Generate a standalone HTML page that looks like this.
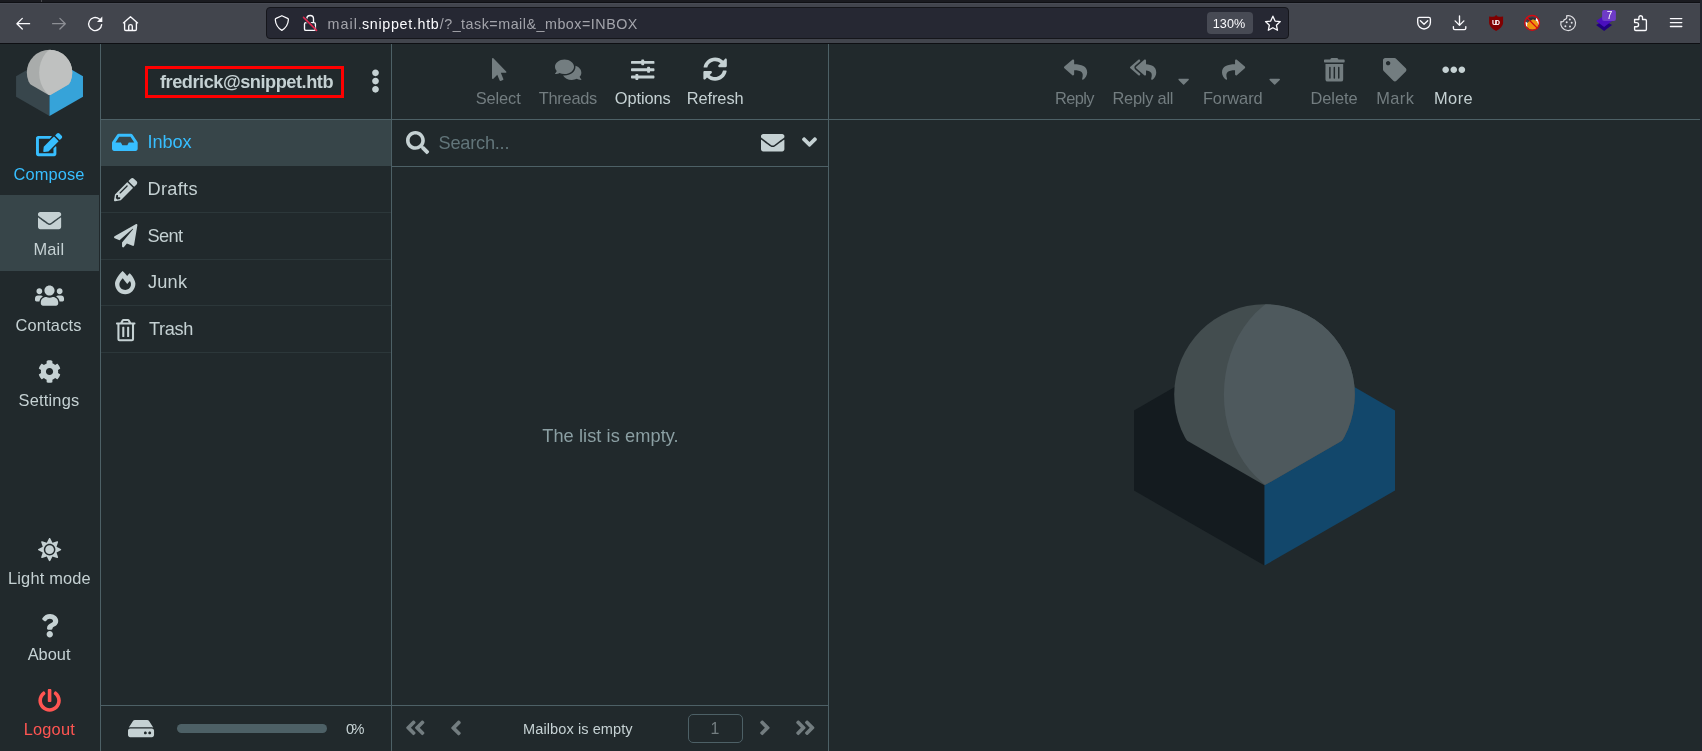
<!DOCTYPE html>
<html lang="en">
<head>
<meta charset="utf-8">
<title>Roundcube Webmail :: Inbox</title>
<style>
html,body{margin:0;padding:0;}
body{width:1702px;height:751px;overflow:hidden;background:#21292c;position:relative;
 font-family:"Liberation Sans",sans-serif;color:#c5d1d3;}
*{box-sizing:border-box;}
.abs{position:absolute;}
svg{position:absolute;display:block;overflow:visible;}
.t{position:absolute;white-space:nowrap;line-height:1;}
#tabstrip{left:0;top:0;width:1702px;height:3px;background:#1a1b20;border-bottom:1px solid #0f1014;}
#navbar{left:0;top:3px;width:1702px;height:40px;background:#42454d;border-top:1px solid #484b54;}
#navline{left:0;top:43px;width:1702px;height:1px;background:#0e0f13;}
#urlbar{left:266px;top:7px;width:1023px;height:32px;background:#262833;border:1px solid #15161b;border-radius:4px;}
#zoombadge{left:1207px;top:12px;width:46px;height:22px;background:#474a54;border-radius:4px;}
.vline{position:absolute;width:1px;background:#4d6066;}
.hline{position:absolute;height:1px;background:#4d6066;}
.rowline{position:absolute;height:1px;background:#2c373a;left:101px;width:290px;}
</style>
</head>
<body>
<!-- browser chrome -->
<div class="abs" id="tabstrip"></div>
<div class="abs" style="left:41px;top:0;width:1px;height:2px;background:#4a4b50"></div>
<div class="abs" id="navbar"></div>
<div class="abs" id="navline"></div>
<div class="abs" id="urlbar"></div>
<div class="abs" id="zoombadge"></div>
<!-- app structure -->
<div class="abs" style="left:0;top:195px;width:99px;height:76px;background:#374549"></div>
<div class="abs" style="left:101px;top:120px;width:290px;height:46px;background:#374549"></div>
<div class="vline" style="left:100px;top:44px;height:707px"></div>
<div class="vline" style="left:391px;top:44px;height:707px"></div>
<div class="vline" style="left:828px;top:44px;height:707px"></div>
<div class="hline" style="left:101px;top:119px;width:1601px"></div>
<div class="hline" style="left:392px;top:166px;width:436px"></div>
<div class="hline" style="left:101px;top:705px;width:727px"></div>
<div class="rowline" style="top:212px"></div>
<div class="rowline" style="top:259px"></div>
<div class="rowline" style="top:305px"></div>
<div class="rowline" style="top:352px"></div>
<!-- user box, quota bar, page input -->
<div class="abs" style="left:145.3px;top:66.3px;width:198.5px;height:32px;border:3.5px solid #ff0000"></div>
<div class="abs" style="left:176.6px;top:723.8px;width:150.5px;height:9.3px;border-radius:5px;background:#4d6066"></div>
<div class="abs" style="left:688px;top:714px;width:55px;height:29px;border:1px solid #4d6066;border-radius:5px"></div>
<!-- logos -->
<svg style="left:0;top:0" width="1702" height="751" viewBox="0 0 1702 751">
<g transform="">
<polygon fill="#141b1f" points="1134,410.4 1264.5,335.1 1264.5,565.5 1134,490.6"/>
<polygon fill="#12476b" points="1395,410.4 1264.5,335.1 1264.5,565.5 1395,490.6"/>
<clipPath id="lbv"><polygon points="1064.5,369.9 1064.5,200 1464.5,200 1464.5,369.9 1264.5,485.3"/></clipPath>
<clipPath id="lbc"><circle cx="1264.5" cy="394.6" r="90.3"/></clipPath>
<g clip-path="url(#lbv)">
<circle cx="1264.5" cy="394.6" r="90.3" fill="#434d4f"/>
<g clip-path="url(#lbc)"><ellipse cx="1311.00" cy="394.6" rx="87.1" ry="106" fill="#4e595d"/></g>
</g>
</g><g transform="translate(-274.69 -29.03) scale(0.2564)">
<polygon fill="#38464c" points="1134,410.4 1264.5,335.1 1264.5,565.5 1134,490.6"/>
<polygon fill="#36a3d9" points="1395,410.4 1264.5,335.1 1264.5,565.5 1395,490.6"/>
<clipPath id="lsv"><polygon points="1064.5,369.9 1064.5,200 1464.5,200 1464.5,369.9 1264.5,485.3"/></clipPath>
<clipPath id="lsc"><circle cx="1264.6" cy="396.2" r="88.7"/></clipPath>
<g clip-path="url(#lsv)">
<circle cx="1264.6" cy="396.2" r="88.7" fill="#a9acab"/>
<g clip-path="url(#lsc)"><ellipse cx="1311.10" cy="396.2" rx="87.1" ry="106" fill="#bfc1c0"/></g>
</g>
</g>
</svg>
<!-- browser chrome icons -->
<div class="abs" style="left:1700px;top:0;width:2px;height:751px;background:#23252e"></div>
<svg style="left:0;top:0" width="1702" height="44" viewBox="0 0 1702 44" fill="none" stroke="#fbfbfe" stroke-width="1.35" stroke-linecap="round" stroke-linejoin="round">
<!-- back -->
<path stroke-width="1.3" d="M29.6 23.7H17M22.3 18.4L16.9 23.7L22.3 29"/>
<!-- forward (disabled) -->
<path stroke="#8d8f95" stroke-width="1.3" d="M52.6 23.7H65.2M59.9 18.4L65.3 23.7L59.9 29"/>
<!-- reload -->
<path d="M101.63 24.62A6.5 6.5 0 1 1 99.33 19.07"/>
<path fill="#fbfbfe" stroke="none" d="M102.3 16.6V21.9H97z"/>
<!-- home -->
<path d="M123.4 22.9L130.5 16.7L137.6 22.9M124.6 22.2V29.2Q124.6 30.5 125.9 30.5H135.1Q136.4 30.5 136.4 29.2V22.2M128.7 30.3V26.2Q128.7 24.6 130.5 24.6Q132.3 24.6 132.3 26.2V30.3"/>
<!-- shield -->
<path stroke-width="1.25" d="M281.85 15.75L287.6 18.4Q288.5 18.8 288.4 19.8Q287.9 26.8 281.85 30.4Q275.8 26.8 275.3 19.8Q275.2 18.8 276.1 18.4Z"/>
<!-- lock -->
<path d="M306 22.6H313.9Q315.4 22.6 315.4 24.1V28.9Q315.4 30.4 313.9 30.4H306Q304.5 30.4 304.5 28.9V24.1Q304.5 22.6 306 22.6ZM306.8 22.4V18.85A3.35 3.35 0 0 1 313.5 18.85V22.4"/>
<path stroke="#262833" stroke-width="3.2" stroke-linecap="butt" d="M304.2 18.1L314.6 28.4"/>
<path stroke="#e22850" stroke-width="1.5" d="M303.5 17.4L316.6 30.4"/>
<!-- star -->
<path stroke-width="1.3" d="M1272.9 16.2L1275.1 21.1L1280.3 21.6L1276.4 25.2L1277.5 30.3L1272.9 27.7L1268.3 30.3L1269.4 25.2L1265.5 21.6L1270.7 21.1Z"/>
<!-- pocket -->
<path d="M1419.3 17.3H1428.8Q1430.4 17.3 1430.4 18.9V22.5A6.35 6.5 0 0 1 1417.7 22.5V18.9Q1417.7 17.3 1419.3 17.3ZM1420.4 20.8L1424.05 24.3L1427.7 20.8"/>
<!-- download -->
<path d="M1459.5 15.9V25.2M1455.1 20.9L1459.5 25.4L1463.9 20.9M1453.4 26.6V28.2Q1453.4 29.6 1454.8 29.6H1464.4Q1465.8 29.6 1465.8 28.2V26.6"/>
<!-- uBlock -->
<path fill="#800000" stroke="none" d="M1496.1 15L1497.6 16.5Q1500.5 16.9 1503.1 16.6V23.2Q1502.6 27.4 1496.1 30.9Q1489.6 27.4 1489.1 23.2V16.6Q1491.7 16.9 1494.6 16.5Z"/>
<!-- foxyproxy -->
<path fill="#2b3039" stroke="none" d="M1527 19.5Q1532 15.5 1537.5 19.5L1534 22H1529z"/>
<path fill="#ffffff" stroke="none" d="M1525.2 21.5L1528.6 23.4L1527.2 27.6Q1525 25 1525.2 21.5ZM1536.6 17.6L1539 21.5L1538.6 25.5L1535.4 20.6Z"/>
<ellipse cx="1532.6" cy="25" rx="5.6" ry="4.6" fill="#f0930f" stroke="none"/>
<path fill="#f0930f" stroke="none" d="M1528 22.5L1533 19.2L1537.6 21.8L1536 26H1529z"/>
<circle cx="1532.1" cy="22.9" r="7.4" stroke="#d80a10" stroke-width="1.3"/>
<path stroke="#d80a10" stroke-width="1.3" d="M1526.9 17.7L1537.3 28.1"/>
<!-- cookie -->
<path stroke="#e0e0e4" stroke-width="1.2" d="M1566.6 15.9A7.4 7.4 0 1 1 1560.9 21.6A2.4 2.4 0 0 0 1564.2 19.6A2.6 2.6 0 0 0 1566.6 15.9Z"/>
<g fill="#e0e0e4" stroke="none"><circle cx="1569.8" cy="19.4" r="1"/><circle cx="1566.7" cy="22.3" r="1"/><circle cx="1571.7" cy="22.7" r="1"/><circle cx="1565.4" cy="26.2" r="1"/><circle cx="1570" cy="26.4" r="1"/></g>
<!-- stack -->
<polygon fill="#21007f" stroke="none" points="1596.1,24.9 1604.1,20.5 1612.1,24.9 1604.1,31"/>
<polygon fill="#4a0fbe" stroke="none" points="1596.1,20.9 1604.1,15.5 1612.1,20.9 1604.1,27"/>
<rect x="1602.1" y="10" width="13.8" height="10.9" rx="2" fill="#6e3bc7" stroke="none"/>
<!-- extensions puzzle -->
<path d="M1634.6 19.5H1638.9V17.6A1.8 1.9 0 0 1 1642.5 17.6V19.5H1645.2Q1646.4 19.5 1646.4 20.7V29.3Q1646.4 30.5 1645.2 30.5H1635.8Q1634.6 30.5 1634.6 29.3V26.7H1636.6A2 2.05 0 0 0 1636.6 22.6H1634.6Z"/>
<!-- menu -->
<path stroke-width="1.3" d="M1670.4 18.6H1681.8M1670.4 22.6H1681.8M1670.4 26.5H1681.8"/>
</svg>

<!-- icons -->
<svg style="left:35.95px;top:132.66px" width="26.19" height="23.28" viewBox="0 0 576 512"><path fill="#37beff" d="M402.6 83.200l90.200 90.200c3.800 3.800 3.800 10 0 13.800L274.400 405.600l-92.800 10.300c-12.400 1.400-22.900-9.100-21.500-21.500l10.300-92.800L388.800 83.200c3.800-3.800 10-3.800 13.800 0zm162-22.900l-48.800-48.800c-15.200-15.200-39.900-15.200-55.200 0l-35.400 35.400c-3.800 3.800-3.800 10 0 13.800l90.200 90.200c3.800 3.800 10 3.800 13.800 0l35.400-35.400c15.200-15.300 15.200-40 0-55.200zM384 346.200V448H64V128h229.800c3.200 0 6.200-1.300 8.500-3.500l40-40c7.600-7.600 2.200-20.500-8.500-20.500H48C21.500 64 0 85.500 0 112v352c0 26.500 21.500 48 48 48h352c26.500 0 48-21.500 48-48V306.200c0-10.700-12.900-16-20.500-8.500l-40 40c-2.200 2.300-3.500 5.300-3.500 8.500z"/></svg>
<svg style="left:37.88px;top:209.07px" width="23.15" height="23.15" viewBox="0 0 512 512"><path fill="#c5d1d3" d="M502.3 190.800c3.900-3.100 9.700-.2 9.700 4.700V400c0 26.500-21.500 48-48 48H48c-26.500 0-48-21.500-48-48V195.600c0-5 5.700-7.800 9.700-4.700 22.400 17.400 52.100 39.500 154.100 113.600 21.100 15.400 56.700 47.800 92.200 47.600 35.700.3 72-32.800 92.300-47.600 102-74.100 131.600-96.300 154-113.700zM256 320c23.200.4 56.600-29.200 73.400-41.400 132.700-96.300 142.800-104.700 173.400-128.700 5.800-4.500 9.200-11.500 9.200-18.900v-19c0-26.500-21.500-48-48-48H48C21.500 64 0 85.500 0 112v19c0 7.400 3.400 14.300 9.200 18.900 30.600 23.900 40.700 32.400 173.400 128.700 16.800 12.200 50.200 41.800 73.400 41.400z"/></svg>
<svg style="left:34.89px;top:284.49px" width="29.03" height="23.22" viewBox="0 0 640 512"><path fill="#c5d1d3" d="M96 224c35.300 0 64-28.700 64-64s-28.700-64-64-64-64 28.700-64 64 28.700 64 64 64zm448 0c35.300 0 64-28.700 64-64s-28.700-64-64-64-64 28.700-64 64 28.700 64 64 64zm32 32h-64c-17.600 0-33.500 7.100-45.100 18.600 40.300 22.100 68.900 62 75.100 109.400h66c17.700 0 32-14.300 32-32v-32c0-35.300-28.700-64-64-64zm-256 0c61.900 0 112-50.100 112-112S381.900 32 320 32 208 82.100 208 144s50.100 112 112 112zm76.800 32h-8.300c-20.800 10-43.900 16-68.500 16s-47.600-6-68.500-16h-8.300C179.600 288 128 339.600 128 403.200V432c0 26.500 21.500 48 48 48h288c26.500 0 48-21.500 48-48v-28.800c0-63.600-51.600-115.200-115.200-115.200zm-223.700-13.400C161.500 263.100 145.600 256 128 256H64c-35.300 0-64 28.700-64 64v32c0 17.700 14.300 32 32 32h65.900c6.300-47.400 34.900-87.300 75.200-109.400z"/></svg>
<svg style="left:37.82px;top:359.97px" width="23.06" height="23.06" viewBox="0 0 512 512"><path fill="#c5d1d3" d="M487.4 315.700l-42.600-24.600c4.300-23.200 4.300-47 0-70.200l42.600-24.600c4.900-2.800 7.100-8.600 5.500-14-11.100-35.600-30-67.800-54.700-94.600-3.800-4.100-10-5.100-14.800-2.300L380.800 110c-17.900-15.400-38.500-27.300-60.800-35.100V25.800c0-5.600-3.900-10.500-9.400-11.700-36.700-8.200-74.300-7.800-109.200 0-5.500 1.200-9.400 6.100-9.400 11.700V75c-22.200 7.900-42.800 19.800-60.800 35.100L88.700 85.500c-4.900-2.800-11-1.900-14.800 2.300-24.700 26.700-43.600 58.900-54.700 94.600-1.700 5.400.6 11.200 5.500 14L67.300 221c-4.300 23.200-4.300 47 0 70.200l-42.600 24.600c-4.900 2.800-7.100 8.600-5.500 14 11.100 35.600 30 67.800 54.700 94.600 3.800 4.100 10 5.100 14.800 2.300l42.600-24.600c17.900 15.400 38.500 27.300 60.800 35.100v49.200c0 5.600 3.900 10.500 9.400 11.700 36.700 8.200 74.300 7.800 109.200 0 5.500-1.200 9.400-6.100 9.400-11.700v-49.200c22.200-7.900 42.800-19.800 60.800-35.100l42.600 24.600c4.900 2.800 11 1.900 14.800-2.300 24.700-26.700 43.600-58.900 54.700-94.600 1.500-5.500-.7-11.300-5.600-14.100zM256 336c-44.100 0-80-35.900-80-80s35.900-80 80-80 80 35.900 80 80-35.900 80-80 80z"/></svg>
<svg style="left:37.58px;top:537.72px" width="23.25" height="23.25" viewBox="0 0 512 512"><path fill="#c5d1d3" d="M256 160c-52.900 0-96 43.100-96 96s43.100 96 96 96 96-43.100 96-96-43.100-96-96-96zm246.400 80.500l-94.700-47.300 33.500-100.400c4.500-13.600-8.400-26.500-21.900-21.900l-100.400 33.500-47.400-94.800c-6.400-12.800-24.600-12.800-31 0l-47.300 94.700L92.700 70.800c-13.600-4.500-26.500 8.400-21.900 21.900l33.500 100.400-94.700 47.400c-12.800 6.400-12.800 24.600 0 31l94.700 47.300-33.500 100.500c-4.500 13.600 8.400 26.500 21.900 21.900l100.400-33.500 47.300 94.700c6.400 12.800 24.600 12.800 31 0l47.300-94.700 100.400 33.500c13.600 4.500 26.500-8.400 21.900-21.900l-33.500-100.400 94.700-47.300c13-6.500 13-24.700.2-31.100zm-155.900 106c-49.900 49.900-131.100 49.900-181 0-49.900-49.900-49.900-131.100 0-181 49.900-49.900 131.100-49.900 181 0 49.900 49.900 49.900 131.100 0 181z"/></svg>
<svg style="left:40.74px;top:614.1px" width="17.55" height="23.39" viewBox="0 0 384 512"><path fill="#c5d1d3" d="M202.021 0C122.202 0 70.503 32.703 29.914 91.026c-7.363 10.580-5.093 25.086 5.178 32.874l43.138 32.709c10.373 7.865 25.132 6.026 33.253-4.148 25.049-31.381 43.630-49.449 82.757-49.449 30.764 0 68.816 19.799 68.816 49.631 0 22.552-18.617 34.134-48.993 51.164-35.423 19.860-82.299 44.576-82.299 106.405V320c0 13.255 10.745 24 24 24h72.471c13.255 0 24-10.745 24-24v-5.773c0-42.860 125.268-44.645 125.268-160.627C377.504 66.256 286.902 0 202.021 0zM192 373.459c-38.196 0-69.271 31.075-69.271 69.271 0 38.195 31.075 69.270 69.271 69.270s69.271-31.075 69.271-69.271-31.075-69.270-69.271-69.270z"/></svg>
<svg style="left:38.15px;top:689.18px" width="23.19" height="23.19" viewBox="0 0 512 512"><path fill="#ff5552" d="M400 54.100c63 45 104 118.600 104 201.900 0 136.800-110.800 247.700-247.500 248C120 504.300 8.200 393 8 256.400 7.900 173.100 48.900 99.300 111.800 54.200c11.700-8.300 28-4.800 35 7.700L162.600 90c5.900 10.500 3.100 23.800-6.600 31-41.500 30.800-68 79.600-68 134.900-.1 92.300 74.500 168.100 168 168.100 91.600 0 168.600-74.200 168-169.100-.3-51.800-24.700-101.800-68.100-134-9.700-7.200-12.400-20.500-6.500-30.900l15.800-28.100c7-12.400 23.200-16.100 34.800-7.800zM296 264V24c0-13.300-10.700-24-24-24h-32c-13.300 0-24 10.700-24 24v240c0 13.300 10.700 24 24 24h32c13.300 0 24-10.700 24-24z"/></svg>
<svg style="left:370.74px;top:69.38px" width="9.01" height="24.03" viewBox="0 0 192 512"><path fill="#c5d1d3" d="M96 184c39.8 0 72 32.2 72 72s-32.2 72-72 72-72-32.2-72-72 32.2-72 72-72zM24 80c0 39.8 32.2 72 72 72s72-32.2 72-72S135.8 8 96 8 24 40.2 24 80zm0 352c0 39.8 32.2 72 72 72s72-32.2 72-72-32.2-72-72-72-72 32.2-72 72z"/></svg>
<svg style="left:112.25px;top:131.18px" width="25.7" height="22.84" viewBox="0 0 576 512"><path fill="#37beff" d="M567.938 243.908L462.25 85.374A48.003 48.003 0 0 0 422.311 64H153.689a48 48 0 0 0-39.938 21.374L8.062 243.908A47.994 47.994 0 0 0 0 270.533V400c0 26.51 21.49 48 48 48h480c26.51 0 48-21.49 48-48V270.533a47.994 47.994 0 0 0-8.062-26.625zM162.252 128h251.497l85.333 128H376l-32 64H232l-32-64H76.918l85.334-128z"/></svg>
<svg style="left:113.72px;top:177.97px" width="23.25" height="23.25" viewBox="0 0 512 512"><path fill="#c5d1d3" d="M497.9 142.1l-46.1 46.1c-4.7 4.7-12.3 4.7-17 0l-111-111c-4.7-4.700-4.700-12.300 0-17l46.100-46.100c18.700-18.700 49.100-18.700 67.900 0l60.100 60.100c18.800 18.700 18.800 49.100 0 67.900zM284.200 99.800L21.600 362.400.4 483.900c-2.900 16.400 11.400 30.600 27.800 27.800l121.500-21.300 262.600-262.600c4.700-4.700 4.700-12.300 0-17l-111-111c-4.800-4.700-12.400-4.700-17.100 0zM124.100 339.900c-5.500-5.500-5.500-14.300 0-19.800l154-154c5.500-5.500 14.300-5.500 19.800 0s5.500 14.300 0 19.800l-154 154c-5.500 5.500-14.300 5.500-19.800 0zM88 424h48v36.300l-64.500 11.300-31.100-31.100L51.700 376H88v48z"/></svg>
<svg style="left:113.9px;top:224px" width="23.4" height="23.4" viewBox="0 0 512 512"><path fill="#c5d1d3" d="M476 3.200L12.500 270.600c-18.100 10.400-15.800 35.600 2.200 43.200L121 358.400l287.300-253.200c5.500-4.900 13.300 2.600 8.600 8.300L176 407v80.500c0 23.600 28.500 32.900 42.500 15.800L282 426l124.600 52.200c14.200 6 30.400-2.900 33-18.200l72-432C515 7.800 493.300-6.800 476 3.200z"/></svg>
<svg style="left:114.94px;top:270.94px" width="20.41" height="23.33" viewBox="0 0 448 512"><path fill="#c5d1d3" d="M323.56 51.2c-20.8 19.3-39.58 39.59-56.22 59.97C240.08 73.62 206.28 35.53 168 0 69.74 91.17 0 209.96 0 281.6 0 408.85 100.29 512 224 512s224-103.150 224-230.400c0-53.270-51.980-163.140-124.440-230.400zm-19.470 340.650C282.430 407.010 255.720 416 226.860 416 154.710 416 96 368.260 96 290.750c0-38.610 24.310-72.630 72.790-130.750 6.930 7.980 98.830 125.340 98.830 125.340l58.630-66.880c4.140 6.850 7.910 13.550 11.270 19.970 27.350 52.190 15.810 118.970-33.430 153.420z"/></svg>
<svg style="left:115.58px;top:318.54px" width="19.44" height="22.22" viewBox="0 0 448 512"><path fill="#c5d1d3" d="M268 416h24a12 12 0 0 0 12-12V188a12 12 0 0 0-12-12h-24a12 12 0 0 0-12 12v216a12 12 0 0 0 12 12zM432 80h-82.410l-34-56.700A48 48 0 0 0 274.410 0H173.590a48 48 0 0 0-41.160 23.300L98.410 80H16A16 16 0 0 0 0 96v16a16 16 0 0 0 16 16h16v336a48 48 0 0 0 48 48h288a48 48 0 0 0 48-48V128h16a16 16 0 0 0 16-16V96a16 16 0 0 0-16-16zM171.840 50.910A6 6 0 0 1 177 48h94a6 6 0 0 1 5.150 2.910L293.610 80H154.390zM368 464H80V128h288zm-212-48h24a12 12 0 0 0 12-12V188a12 12 0 0 0-12-12h-24a12 12 0 0 0-12 12v216a12 12 0 0 0 12 12z"/></svg>
<svg style="left:127.73px;top:716.72px" width="26.05" height="23.16" viewBox="0 0 576 512"><path fill="#c5d1d3" d="M576 304v96c0 26.510-21.490 48-48 48H48c-26.510 0-48-21.490-48-48v-96c0-26.510 21.490-48 48-48h480c26.510 0 48 21.490 48 48zm-48-80a79.557 79.557 0 0 1 30.777 6.165L462.25 85.374A48.003 48.003 0 0 0 422.311 64H153.689a48 48 0 0 0-39.938 21.374L17.223 230.165A79.557 79.557 0 0 1 48 224h480zm-48 96c-17.673 0-32 14.327-32 32s14.327 32 32 32 32-14.327 32-32-14.327-32-32-32zm-96 0c-17.673 0-32 14.327-32 32s14.327 32 32 32 32-14.327 32-32-14.327-32-32-32z"/></svg>
<svg style="left:491.75px;top:58.02px" width="14.41" height="23.05" viewBox="0 0 320 512"><path fill="#737d80" d="M302.189 329.126H196.105l55.831 135.993c3.889 9.428-.555 19.999-9.444 23.999l-49.165 21.427c-9.165 4-19.443-.571-23.332-9.714l-53.053-129.136-86.664 89.138C18.729 472.71 0 463.554 0 447.977V18.299C0 1.899 19.921-6.096 30.277 5.443l284.412 292.542c11.472 11.179 3.007 31.141-12.5 31.141z"/></svg>
<svg style="left:554.83px;top:57.94px" width="26.35" height="23.42" viewBox="0 0 576 512"><path fill="#737d80" d="M416 192c0-88.4-93.1-160-208-160S0 103.600 0 192c0 34.300 14.100 65.900 38 92-13.400 30.200-35.500 54.200-35.800 54.500-2.200 2.300-2.800 5.700-1.500 8.700S4.800 352 8 352c36.600 0 66.900-12.300 88.700-25 32.200 15.700 70.300 25 111.300 25 114.900 0 208-71.600 208-160zm122 220c23.900-26 38-57.700 38-92 0-66.900-53.500-124.200-129.300-148.100.9 6.600 1.300 13.300 1.300 20.100 0 105.900-107.700 192-240 192-10.800 0-21.300-.8-31.700-1.900C207.800 439.600 281.800 480 368 480c41 0 79.100-9.200 111.300-25 21.800 12.700 52.100 25 88.700 25 3.200 0 6.100-1.900 7.300-4.800 1.300-2.900.7-6.300-1.500-8.700-.3-.3-22.400-24.200-35.800-54.500z"/></svg>
<svg style="left:630.73px;top:57.93px" width="23.45" height="23.45" viewBox="0 0 512 512"><path fill="#c5d1d3" d="M496 384H160v-16c0-8.800-7.200-16-16-16h-32c-8.800 0-16 7.200-16 16v16H16c-8.800 0-16 7.200-16 16v32c0 8.800 7.200 16 16 16h80v16c0 8.800 7.200 16 16 16h32c8.800 0 16-7.200 16-16v-16h336c8.800 0 16-7.200 16-16v-32c0-8.800-7.200-16-16-16zm0-160h-80v-16c0-8.800-7.200-16-16-16h-32c-8.800 0-16 7.200-16 16v16H16c-8.800 0-16 7.200-16 16v32c0 8.800 7.200 16 16 16h336v16c0 8.800 7.200 16 16 16h32c8.800 0 16-7.200 16-16v-16h80c8.800 0 16-7.200 16-16v-32c0-8.800-7.200-16-16-16zm0-160H288V48c0-8.800-7.200-16-16-16h-32c-8.800 0-16 7.200-16 16v16H16C7.200 64 0 71.200 0 80v32c0 8.800 7.200 16 16 16h208v16c0 8.800 7.200 16 16 16h32c8.800 0 16-7.200 16-16v-16h208c8.800 0 16-7.200 16-16V80c0-8.800-7.200-16-16-16z"/></svg>
<svg style="left:703.3px;top:57.05px" width="24.21" height="24.21" viewBox="0 0 512 512"><path fill="#c5d1d3" d="M370.72 133.28C339.458 104.008 298.888 87.962 255.848 88c-77.458.068-144.328 53.178-162.791 126.85-1.344 5.363-6.122 9.15-11.651 9.15H24.103c-7.498 0-13.194-6.807-11.807-14.176C33.933 94.924 134.813 8 256 8c66.448 0 126.791 26.136 171.315 68.685L463.03 40.97C478.149 25.851 504 36.559 504 57.941V192c0 13.255-10.745 24-24 24H345.941c-21.382 0-32.09-25.851-16.971-40.971l41.75-41.749zM32 296h134.059c21.382 0 32.09 25.851 16.971 40.971l-41.75 41.75c31.262 29.273 71.835 45.319 114.876 45.28 77.418-.07 144.315-53.144 162.787-126.849 1.344-5.363 6.122-9.15 11.651-9.15h57.304c7.498 0 13.194 6.807 11.807 14.176C478.067 417.076 377.187 504 256 504c-66.448 0-126.791-26.136-171.315-68.685L48.97 471.03C33.851 486.149 8 475.441 8 454.059V320c0-13.255 10.745-24 24-24z"/></svg>
<svg style="left:406.15px;top:130.85px" width="23.2" height="23.2" viewBox="0 0 512 512"><path fill="#c5d1d3" d="M505 442.7L405.3 343c-4.5-4.5-10.6-7-17-7H372c27.6-35.3 44-79.7 44-128C416 93.100 322.900 0 208 0S0 93.100 0 208s93.100 208 208 208c48.300 0 92.700-16.400 128-44v16.300c0 6.400 2.500 12.500 7 17l99.700 99.700c9.400 9.400 24.600 9.400 33.900 0l28.300-28.300c9.400-9.400 9.400-24.600.1-34zM208 336c-70.700 0-128-57.200-128-128 0-70.700 57.200-128 128-128 70.700 0 128 57.200 128 128 0 70.700-57.200 128-128 128z"/></svg>
<svg style="left:761.1px;top:130.8px" width="23.4" height="23.4" viewBox="0 0 512 512"><path fill="#c5d1d3" d="M502.3 190.800c3.900-3.100 9.700-.2 9.700 4.700V400c0 26.500-21.500 48-48 48H48c-26.500 0-48-21.500-48-48V195.600c0-5 5.700-7.800 9.700-4.700 22.400 17.400 52.100 39.500 154.100 113.600 21.100 15.400 56.700 47.800 92.200 47.600 35.700.3 72-32.800 92.300-47.600 102-74.100 131.600-96.300 154-113.700zM256 320c23.200.4 56.600-29.200 73.400-41.400 132.700-96.300 142.800-104.700 173.400-128.700 5.800-4.500 9.200-11.500 9.200-18.900v-19c0-26.500-21.500-48-48-48H48C21.500 64 0 85.500 0 112v19c0 7.400 3.400 14.300 9.200 18.900 30.600 23.900 40.700 32.400 173.400 128.700 16.800 12.200 50.200 41.800 73.400 41.400z"/></svg>
<svg style="left:801.86px;top:130.41px" width="14.99" height="23.98" viewBox="0 0 320 512"><path fill="#c5d1d3" d="M143 352.3L7 216.300c-9.400-9.400-9.400-24.600 0-33.900l22.600-22.600c9.400-9.400 24.600-9.400 33.900 0l96.400 96.400 96.400-96.400c9.400-9.400 24.600-9.400 33.900 0l22.600 22.600c9.400 9.400 9.400 24.600 0 33.900l-136 136c-9.200 9.400-24.400 9.400-33.800 0z"/></svg>
<svg style="left:404.54px;top:716.42px" width="20.61" height="23.56" viewBox="0 0 448 512"><path fill="#737d80" d="M223.700 239l136-136c9.400-9.400 24.600-9.400 33.900 0l22.600 22.600c9.400 9.400 9.400 24.600 0 33.900L319.900 256l96.400 96.400c9.400 9.400 9.400 24.600 0 33.900L393.700 409c-9.400 9.400-24.600 9.400-33.900 0l-136-136c-9.500-9.400-9.500-24.600-.1-34zm-192 34l136 136c9.400 9.400 24.600 9.400 33.900 0l22.600-22.600c9.400-9.400 9.400-24.600 0-33.900L127.900 256l96.400-96.400c9.400-9.400 9.400-24.600 0-33.900L201.700 103c-9.400-9.400-24.600-9.400-33.900 0l-136 136c-9.500 9.400-9.500 24.600-.1 34z"/></svg>
<svg style="left:449.57px;top:716.23px" width="11.97" height="23.94" viewBox="0 0 256 512"><path fill="#737d80" d="M31.700 239l136-136c9.400-9.400 24.600-9.400 33.900 0l22.600 22.600c9.400 9.400 9.400 24.600 0 33.900L127.900 256l96.400 96.400c9.400 9.400 9.400 24.600 0 33.900L201.700 409c-9.400 9.400-24.600 9.400-33.900 0l-136-136c-9.500-9.400-9.500-24.600-.1-34z"/></svg>
<svg style="left:758.7px;top:716.41px" width="11.79" height="23.57" viewBox="0 0 256 512"><path fill="#737d80" d="M224.300 273l-136 136c-9.400 9.400-24.600 9.400-33.900 0l-22.600-22.600c-9.400-9.400-9.400-24.600 0-33.900l96.400-96.400-96.400-96.400c-9.400-9.400-9.400-24.600 0-33.900L54.300 103c9.400-9.400 24.600-9.400 33.900 0l136 136c9.500 9.400 9.500 24.600.1 34z"/></svg>
<svg style="left:794.74px;top:716.42px" width="20.61" height="23.56" viewBox="0 0 448 512"><path fill="#737d80" d="M224.300 273l-136 136c-9.400 9.400-24.600 9.400-33.900 0l-22.600-22.600c-9.400-9.400-9.400-24.600 0-33.900l96.400-96.400-96.400-96.400c-9.400-9.400-9.400-24.600 0-33.900L54.300 103c9.400-9.400 24.600-9.400 33.900 0l136 136c9.500 9.400 9.500 24.600.1 34zm192-34l-136-136c-9.400-9.400-24.600-9.400-33.900 0l-22.600 22.600c-9.400 9.400-9.400 24.600 0 33.900l96.400 96.400-96.400 96.400c-9.400 9.400-9.400 24.600 0 33.900l22.600 22.600c9.400 9.400 24.600 9.400 33.900 0l136-136c9.400-9.200 9.400-24.400 0-33.800z"/></svg>
<svg style="left:1063.8px;top:58.05px" width="23.2" height="23.2" viewBox="0 0 512 512"><path fill="#737d80" d="M8.309 189.836L184.313 37.851C199.719 24.546 224 35.347 224 56.015v80.053c160.629 1.839 288 34.032 288 186.258 0 61.441-39.581 122.309-83.333 154.132-13.653 9.931-33.111-2.533-28.077-18.631 45.344-145.012-21.507-183.51-176.59-185.742V360c0 20.7-24.3 31.453-39.687 18.164l-176.004-152c-11.071-9.562-11.086-26.753 0-36.328z"/></svg>
<svg style="left:1129.98px;top:57.98px" width="26.25" height="23.33" viewBox="0 0 576 512"><path fill="#737d80" d="M136.309 189.836L312.313 37.851C327.72 24.546 352 35.348 352 56.015v82.763c129.182 10.231 224 52.212 224 183.548 0 61.441-39.582 122.309-83.333 154.132-13.653 9.931-33.111-2.533-28.077-18.631 38.512-123.162-3.922-169.482-112.59-182.015v84.175c0 20.701-24.3 31.453-39.687 18.164L136.309 226.164c-11.071-9.561-11.086-26.753 0-36.328zm-128 36.328L184.313 378.15C199.7 391.439 224 380.687 224 359.986v-15.818l-108.606-93.785A55.96 55.96 0 0 1 96 207.998a55.953 55.953 0 0 1 19.393-42.38L224 71.832V56.015c0-20.667-24.28-31.469-39.687-18.164L8.309 189.836c-11.086 9.575-11.071 26.767 0 36.328z"/></svg>
<svg style="left:1178.26px;top:72.11px" width="11.28" height="18.04" viewBox="0 0 320 512"><path fill="#737d80" d="M31.3 192h257.300c17.800 0 26.700 21.500 14.100 34.100L174.100 354.800c-7.800 7.800-20.500 7.800-28.300 0L17.200 226.100C4.600 213.500 13.500 192 31.300 192z"/></svg>
<svg style="left:1221.6px;top:58.05px" width="23.2" height="23.2" viewBox="0 0 512 512"><path fill="#737d80" d="M503.691 189.836L327.687 37.851C312.281 24.546 288 35.347 288 56.015v80.053C127.371 137.907 0 170.1 0 322.326c0 61.441 39.581 122.309 83.333 154.132 13.653 9.931 33.111-2.533 28.077-18.631C66.066 312.814 132.917 274.316 288 272.085V360c0 20.7 24.3 31.453 39.687 18.164l176.004-152c11.071-9.562 11.086-26.753 0-36.328z"/></svg>
<svg style="left:1268.71px;top:72.02px" width="11.38" height="18.21" viewBox="0 0 320 512"><path fill="#737d80" d="M31.3 192h257.300c17.800 0 26.700 21.500 14.100 34.100L174.100 354.800c-7.800 7.800-20.500 7.800-28.300 0L17.200 226.100C4.600 213.500 13.500 192 31.300 192z"/></svg>
<svg style="left:1323.97px;top:57.74px" width="20.67" height="23.62" viewBox="0 0 448 512"><path fill="#737d80" d="M32 464a48 48 0 0 0 48 48h288a48 48 0 0 0 48-48V128H32zm272-256a16 16 0 0 1 32 0v224a16 16 0 0 1-32 0zm-96 0a16 16 0 0 1 32 0v224a16 16 0 0 1-32 0zm-96 0a16 16 0 0 1 32 0v224a16 16 0 0 1-32 0zM432 32H312l-9.4-18.7A24 24 0 0 0 281.1 0H166.8a23.72 23.72 0 0 0-21.4 13.3L136 32H16A16 16 0 0 0 0 48v32a16 16 0 0 0 16 16h416a16 16 0 0 0 16-16V48a16 16 0 0 0-16-16z"/></svg>
<svg style="left:1383.43px;top:57.97px" width="23.45" height="23.45" viewBox="0 0 512 512"><path fill="#737d80" d="M0 252.118V48C0 21.49 21.49 0 48 0h204.118a48 48 0 0 1 33.941 14.059l211.882 211.882c18.745 18.745 18.745 49.137 0 67.882L293.823 497.941c-18.745 18.745-49.137 18.745-67.882 0L14.059 286.059A48 48 0 0 1 0 252.118zM112 64c-26.51 0-48 21.49-48 48s21.49 48 48 48 48-21.49 48-48-21.49-48-48-48z"/></svg>
<svg style="left:1441.67px;top:57.92px" width="23.55" height="23.55" viewBox="0 0 512 512"><path fill="#c5d1d3" d="M328 256c0 39.8-32.2 72-72 72s-72-32.2-72-72 32.2-72 72-72 72 32.2 72 72zm104-72c-39.8 0-72 32.2-72 72s32.2 72 72 72 72-32.2 72-72-32.2-72-72-72zm-352 0c-39.8 0-72 32.2-72 72s32.2 72 72 72 72-32.2 72-72-32.2-72-72-72z"/></svg>

<!-- texts -->
<div class="abs" style="left:0;top:0;width:1702px;height:751px;will-change:transform">
<span class="t" style="left:13.5px;top:166px;font-size:16.4px;color:#37beff;letter-spacing:0.12px;">Compose</span>
<span class="t" style="left:33.5px;top:241px;font-size:16.4px;color:#c5d1d3;letter-spacing:0.17px;">Mail</span>
<span class="t" style="left:15.6px;top:317px;font-size:16.4px;color:#c5d1d3;letter-spacing:0.16px;">Contacts</span>
<span class="t" style="left:18.6px;top:392px;font-size:16.4px;color:#c5d1d3;letter-spacing:0.19px;">Settings</span>
<span class="t" style="left:8px;top:570px;font-size:16.4px;color:#c5d1d3;letter-spacing:0.18px;">Light mode</span>
<span class="t" style="left:27.7px;top:646px;font-size:16.4px;color:#c5d1d3;">About</span>
<span class="t" style="left:23.8px;top:721px;font-size:16.4px;color:#ff5552;letter-spacing:0.16px;">Logout</span>
<span class="t" style="left:160px;top:73px;font-size:18.2px;color:#c5d1d3;font-weight:700;letter-spacing:-0.47px;">fredrick@snippet.htb</span>
<span class="t" style="left:147.5px;top:133px;font-size:18.2px;color:#37beff;letter-spacing:-0.12px;">Inbox</span>
<span class="t" style="left:147.5px;top:180px;font-size:18.2px;color:#c5d1d3;letter-spacing:0.3px;">Drafts</span>
<span class="t" style="left:147.4px;top:227px;font-size:18.2px;color:#c5d1d3;letter-spacing:-0.57px;">Sent</span>
<span class="t" style="left:147.9px;top:273px;font-size:18.2px;color:#c5d1d3;letter-spacing:0.23px;">Junk</span>
<span class="t" style="left:149px;top:320px;font-size:18.2px;color:#c5d1d3;letter-spacing:-0.38px;">Trash</span>
<span class="t" style="left:346px;top:722px;font-size:14.56px;color:#c5d1d3;letter-spacing:-2.5px;">0%</span>
<span class="t" style="left:475.7px;top:90px;font-size:16.4px;color:#737d80;letter-spacing:-0.1px;">Select</span>
<span class="t" style="left:538.8px;top:90px;font-size:16.4px;color:#737d80;letter-spacing:-0.28px;">Threads</span>
<span class="t" style="left:614.8px;top:90px;font-size:16.4px;color:#c5d1d3;letter-spacing:-0.08px;">Options</span>
<span class="t" style="left:686.7px;top:90px;font-size:16.4px;color:#c5d1d3;letter-spacing:-0.07px;">Refresh</span>
<span class="t" style="left:1054.9px;top:90px;font-size:16.4px;color:#737d80;letter-spacing:-0.58px;">Reply</span>
<span class="t" style="left:1112.5px;top:90px;font-size:16.4px;color:#737d80;letter-spacing:-0.24px;">Reply all</span>
<span class="t" style="left:1202.9px;top:90px;font-size:16.4px;color:#737d80;letter-spacing:-0.05px;">Forward</span>
<span class="t" style="left:1310.5px;top:90px;font-size:16.4px;color:#737d80;letter-spacing:-0.04px;">Delete</span>
<span class="t" style="left:1376.3px;top:90px;font-size:16.4px;color:#737d80;letter-spacing:0.37px;">Mark</span>
<span class="t" style="left:1433.9px;top:90px;font-size:16.4px;color:#c5d1d3;letter-spacing:0.5px;">More</span>
<span class="t" style="left:438.6px;top:134px;font-size:18.2px;color:#62757a;letter-spacing:-0.24px;">Search...</span>
<span class="t" style="left:542.2px;top:427px;font-size:18.2px;color:#8b9fa3;letter-spacing:0.08px;">The list is empty.</span>
<span class="t" style="left:523.1px;top:722px;font-size:14.56px;color:#c5d1d3;letter-spacing:0.08px;">Mailbox is empty</span>
<span class="t" style="left:710.5px;top:721px;font-size:15.9px;color:#737d80;">1</span>
<span class="t" style="left:1212.7px;top:18px;font-size:12.6px;color:#fbfbfe;letter-spacing:0.1px;">130%</span>
<span class="t" style="left:1606.8px;top:11px;font-size:10.0px;color:#ffffff;">7</span>
<span class="t" style="left:327.6px;top:17px;font-size:14.3px;color:#a3a4ab;letter-spacing:1px;">mail.</span>
<span class="t" style="left:362px;top:17px;font-size:14.3px;color:#fbfbfe;letter-spacing:0.68px;">snippet.htb</span>
<span class="t" style="left:439.7px;top:17px;font-size:14.3px;color:#a3a4ab;letter-spacing:0.51px;">/?_task=mail&amp;_mbox=INBOX</span>
<span class="t" style="left:1492.1px;top:20px;font-size:6.9px;color:#ffffff;font-weight:700;letter-spacing:-2.1px;">UD</span>

</div>
</body>
</html>
